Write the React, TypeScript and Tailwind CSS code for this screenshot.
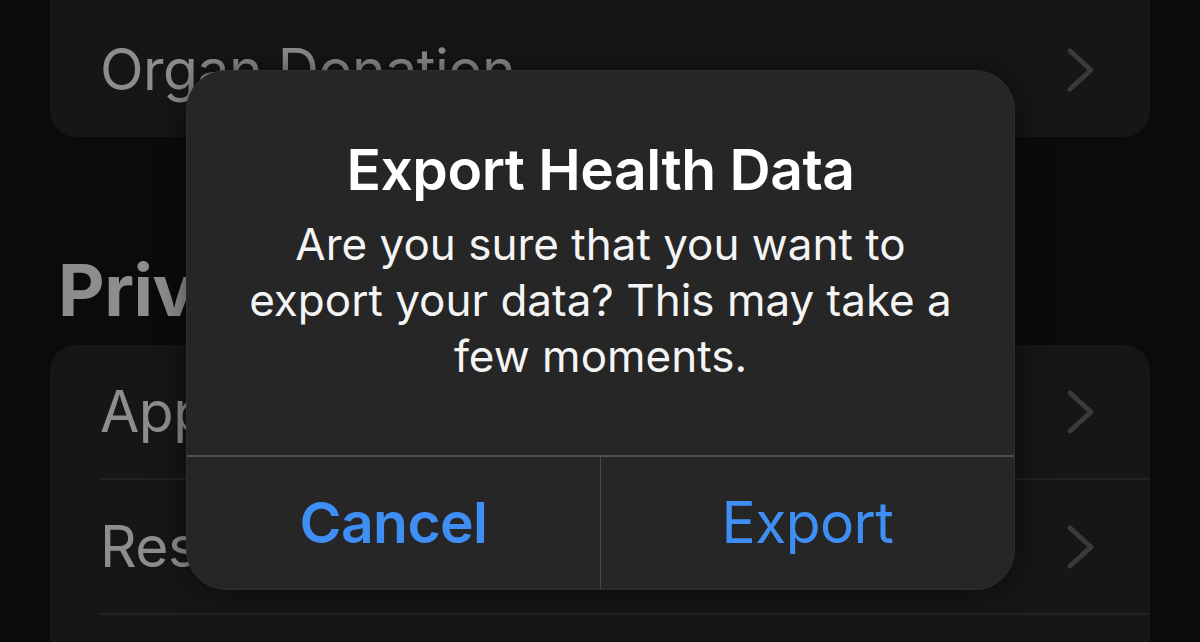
const font = { fontFamily: "Inter, 'Noto Sans', sans-serif" };

function Chevron() {
  return (
    <svg width="30" height="46" viewBox="0 0 30 46" fill="none" className="shrink-0">
      <path d="M4 4 L25 23 L4 42" stroke="#3a3a3a" strokeWidth="5" strokeLinecap="round" strokeLinejoin="round" />
    </svg>
  );
}

function Row({ label, last }: { label: string; last?: boolean }) {
  return (
    <div className="flex h-[135px] items-center pl-[50px]">
      <div className={`flex h-full flex-1 items-center pr-[54px] ${last ? "" : "border-b-2 border-[#222222]"}`}>
        <span className="flex-1 text-[57px] tracking-[-0.5px] text-[#8d8d8d]">{label}</span>
        <Chevron />
      </div>
    </div>
  );
}

export default function App() {
  return (
    <div className="relative h-[642px] w-[1200px] overflow-hidden bg-[#0b0b0b]" style={font}>
      <div className="flex flex-col px-[50px]">
        <div className="-mt-[30px] flex h-[167px] items-end rounded-b-[26px] bg-[#161616]">
          <div className="flex h-[135px] w-full items-center pl-[50px] pr-[54px]">
            <span className="flex-1 text-[57px] tracking-[-0.5px] text-[#8d8d8d]">Organ Donation</span>
            <Chevron />
          </div>
        </div>
        <h2 className="mt-[98px] pl-[8px] text-[72px] font-bold leading-[110px] tracking-[-0.5px] text-[#8d8d8d]">Privacy</h2>
        <div className="rounded-t-[26px] bg-[#161616] pb-[40px]">
          <Row label="Apps" />
          <Row label="Research Studies" />
          <Row label="Devices" last />
        </div>
      </div>

      <div className="absolute left-[186px] top-[70px] flex h-[520px] w-[829px] flex-col overflow-hidden rounded-[40px] border border-[#2e2e2e] bg-[#262626] shadow-[0_0_30px_rgba(0,0,0,0.5)]">
        <div className="flex h-[384px] flex-col items-center px-[40px] pt-[63px] text-center text-white">
          <h1 className="text-[57px] font-semibold leading-[72px] tracking-[-0.5px]">Export Health Data</h1>
          <p className="mt-[10px] text-[44px] leading-[56px] tracking-[0px] text-[#f4f4f4]">
            Are you sure that you want to
            <br />
            export your data? This may take a
            <br />
            few moments.
          </p>
        </div>
        <div className="flex flex-1 border-t-2 border-[#4f4f4f]">
          <button className="flex flex-1 items-center justify-center text-[57px] font-semibold tracking-[-0.6px] text-[#3e8ef4]">Cancel</button>
          <div className="w-[1px] bg-[#4a4a4a]" />
          <button className="flex flex-1 items-center justify-center text-[57px] tracking-[-0.6px] text-[#3e8ef4]">Export</button>
        </div>
      </div>
    </div>
  );
}
